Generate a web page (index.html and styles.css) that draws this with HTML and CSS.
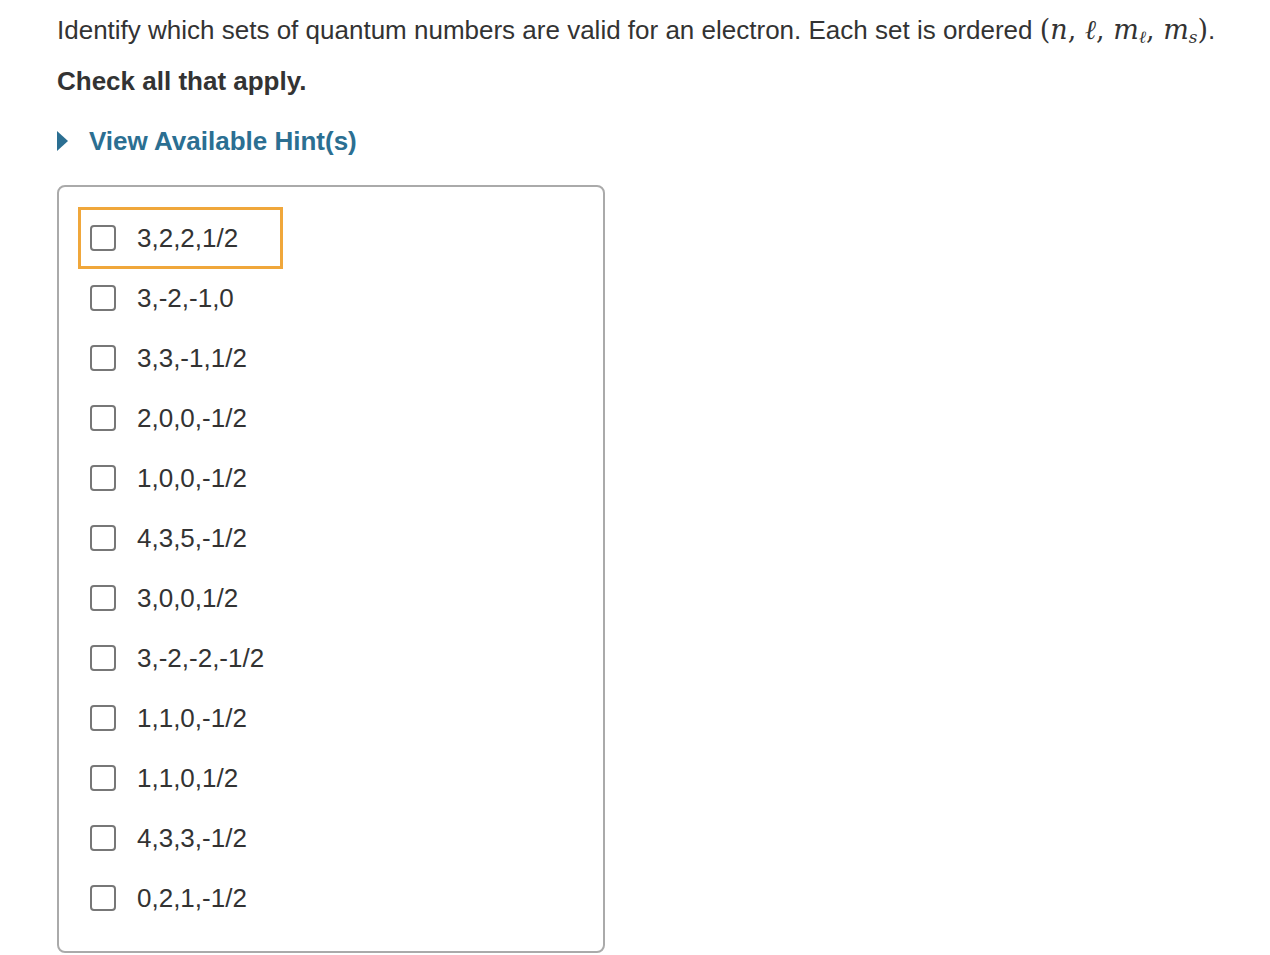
FILE: index.html
```html
<!DOCTYPE html>
<html>
<head>
<meta charset="utf-8">
<link rel="stylesheet" href="styles.css">
</head>
<body>
<div class="page">
  <p class="question">Identify which sets of quantum numbers are valid for an electron. Each set is ordered <span class="math"><span class="up">(</span><i>n</i><span class="up">,</span> <i>ℓ</i><span class="up">,</span> <i>m</i><sub><i>ℓ</i></sub><span class="up">,</span> <i>m</i><sub><i>s</i></sub><span class="up">)</span></span>.</p>
  <p class="instruction">Check all that apply.</p>
  <div class="hint"><span class="tri"></span><span class="hint-text">View Available Hint(s)</span></div>
  <div class="choices">
    <div class="row"><label class="opt focused"><span class="box"></span><span>3,2,2,1/2</span></label></div>
    <div class="row"><label class="opt"><span class="box"></span><span>3,-2,-1,0</span></label></div>
    <div class="row"><label class="opt"><span class="box"></span><span>3,3,-1,1/2</span></label></div>
    <div class="row"><label class="opt"><span class="box"></span><span>2,0,0,-1/2</span></label></div>
    <div class="row"><label class="opt"><span class="box"></span><span>1,0,0,-1/2</span></label></div>
    <div class="row"><label class="opt"><span class="box"></span><span>4,3,5,-1/2</span></label></div>
    <div class="row"><label class="opt"><span class="box"></span><span>3,0,0,1/2</span></label></div>
    <div class="row"><label class="opt"><span class="box"></span><span>3,-2,-2,-1/2</span></label></div>
    <div class="row"><label class="opt"><span class="box"></span><span>1,1,0,-1/2</span></label></div>
    <div class="row"><label class="opt"><span class="box"></span><span>1,1,0,1/2</span></label></div>
    <div class="row"><label class="opt"><span class="box"></span><span>4,3,3,-1/2</span></label></div>
    <div class="row"><label class="opt"><span class="box"></span><span>0,2,1,-1/2</span></label></div>
  </div>
</div>
</body>
</html>
```

FILE: styles.css
```css
html, body {
  margin: 0;
  padding: 0;
  background: #fff;
}
body {
  font-family: "Liberation Sans", Arial, Helvetica, sans-serif;
  color: #333;
}
.page {
  padding: 12px 0 0 57px;
}
.question {
  margin: 0;
  font-size: 26px;
  line-height: 36px;
  white-space: nowrap;
}
.math {
  font-family: "DejaVu Serif", "Liberation Serif", serif;
  font-size: 27px;
}
.math i {
  font-style: italic;
}
.math .up {
  font-style: normal;
}
.math sub {
  font-size: 17px;
  vertical-align: -4px;
  line-height: 0;
}
.instruction {
  margin: 15px 0 0 0;
  font-size: 26px;
  font-weight: bold;
  line-height: 36px;
}
.hint {
  display: flex;
  align-items: center;
  margin-top: 24px;
  height: 36px;
}
.tri {
  width: 0;
  height: 0;
  border-top: 10px solid transparent;
  border-bottom: 10px solid transparent;
  border-left: 11px solid #2b6f92;
  margin-right: 21px;
}
.hint-text {
  font-size: 26px;
  font-weight: bold;
  color: #2b6f92;
}
.choices {
  margin-top: 26px;
  width: 544px;
  border: 2px solid #aaa;
  border-radius: 8px;
  padding: 21px 0 23px 0;
}
.row {
  height: 60px;
  padding-left: 20px;
  display: flex;
  align-items: center;
}
.opt {
  display: inline-flex;
  align-items: center;
  height: 60px;
  padding-left: 11px;
  width: 192px;
  font-size: 26px;
}
.focused {
  outline: 3px solid #f0a73b;
  outline-offset: -2px;
}
.box {
  width: 22px;
  height: 22px;
  border: 2px solid #777;
  border-radius: 4px;
  margin-right: 21px;
  flex: none;
}
```
